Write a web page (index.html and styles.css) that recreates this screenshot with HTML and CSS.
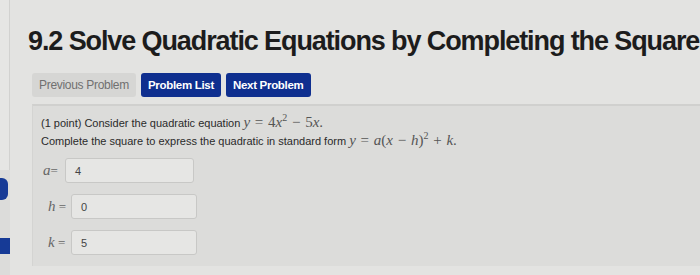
FILE: index.html
```html
<!DOCTYPE html>
<html>
<head>
<meta charset="utf-8">
<link rel="stylesheet" href="styles.css">
</head>
<body>
<div class="page">
  <div class="rail">
    <div class="rail-top"></div>
    <div class="rail-pill"></div>
    <div class="rail-bar"></div>
  </div>
  <div class="main">
    <h1 class="title">9.2 Solve Quadratic Equations by Completing the Square</h1>
    <div class="nav">
      <span class="btn btn-off">Previous Problem</span>
      <span class="btn btn-on">Problem List</span>
      <span class="btn btn-on">Next Problem</span>
    </div>
    <div class="problem">
      <p class="line">(1 point) Consider the quadratic equation <span class="m"><i>y</i> = 4<i>x</i><sup>2</sup> − 5<i>x</i>.</span></p>
      <p class="line">Complete the square to express the quadratic in standard form <span class="m"><i>y</i> = <i>a</i>(<i>x</i> − <i>h</i>)<sup>2</sup> + <i>k</i>.</span></p>
      <div class="answers">
        <div class="row row-a"><span class="lbl"><i>a</i>=</span><span class="inp">4</span></div>
        <div class="row row-h"><span class="lbl"><i>h</i> =</span><span class="inp">0</span></div>
        <div class="row row-k"><span class="lbl"><i>k</i> =</span><span class="inp">5</span></div>
      </div>
    </div>
  </div>
</div>
</body>
</html>
```

FILE: styles.css
```css
html, body {
  margin: 0;
  padding: 0;
}
body {
  width: 700px;
  height: 275px;
  overflow: hidden;
  background: #e3e3e1;
  font-family: "Liberation Sans", Arial, sans-serif;
  color: #222;
}
.page {
  display: flex;
  height: 275px;
}
.rail {
  width: 10px;
  flex: none;
  display: flex;
  flex-direction: column;
  background: #dcdcda;
}
.rail-top {
  height: 170px;
  background: #e6e6e4;
  border-right: 1px solid #d2d2d0;
}
.rail-pill {
  margin-top: 8px;
  height: 22px;
  width: 8px;
  background: #163a96;
  border-radius: 0 6px 6px 0;
}
.rail-bar {
  margin-top: 38px;
  height: 16px;
  width: 10px;
  background: #163a96;
}
.main {
  flex: 1;
  padding-left: 18px;
  min-width: 0;
}
.title {
  margin: 26px 0 0 0;
  font-size: 27px;
  font-weight: bold;
  color: #1c1c1c;
  white-space: nowrap;
  letter-spacing: -1.1px;
  line-height: 31px;
}
.nav {
  display: flex;
  gap: 5px;
  margin: 16px 0 0 4px;
}
.btn {
  display: inline-block;
  height: 24px;
  line-height: 24px;
  padding: 0 7px;
  font-size: 11.5px;
  border-radius: 3px;
  letter-spacing: -0.3px;
  white-space: nowrap;
}
.btn-off {
  background: #d6d6d4;
  color: #707070;
  padding: 0 7px;
  font-size: 12px;
}
.btn-on {
  background: #0f2f8f;
  color: #fff;
  font-weight: bold;
}
.problem {
  margin: 7px 0 0 4px;
  background: #dcdcda;
  border-top: 2px solid #d0d0ce;
  border-left: 1px solid #d4d4d2;
  height: 162px;
  padding: 8px 0 0 8px;
  box-sizing: border-box;
}
.line {
  margin: 0;
  font-size: 11px;
  line-height: 17px;
  color: #2a2a2a;
}
.m {
  font-family: "Liberation Serif", "Times New Roman", serif;
  font-size: 15px;
  color: #555;
  word-spacing: 1px;
}
.m sup {
  font-size: 10px;
  line-height: 0;
}
.answers {
  margin-top: 8px;
  display: flex;
  flex-direction: column;
  gap: 11px;
}
.row {
  display: flex;
  align-items: center;
  height: 25px;
}
.lbl {
  font-family: "Liberation Serif", serif;
  font-size: 13px;
  color: #666;
  padding-left: 2px;
}
.lbl i {
  font-size: 15px;
}
.row-a .lbl { width: 22px; }
.row-h .lbl, .row-k .lbl {
  width: 30px;
  padding-left: 7px;
  box-sizing: border-box;
}
.inp {
  display: flex;
  align-items: center;
  box-sizing: border-box;
  height: 25px;
  width: 129px;
  padding-left: 9px;
  font-size: 11px;
  color: #444;
  background: #e6e6e4;
  border: 1px solid #c8c8c6;
  border-radius: 3px;
}
.row-h .inp, .row-k .inp {
  width: 126px;
}
```
